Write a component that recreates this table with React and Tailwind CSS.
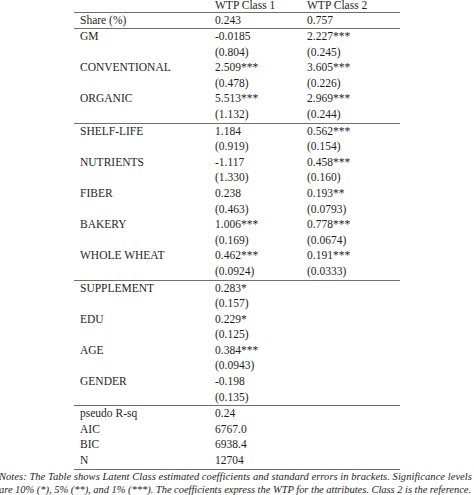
import React from "react";

function Row({ a, b, c }) {
  return (
    <div className="grid grid-cols-[141px_92px_93px] h-[15.6px] items-center leading-[15.6px] whitespace-nowrap">
      <div className="pl-[6px]">{a}</div>
      <div>{b}</div>
      <div>{c}</div>
    </div>
  );
}

const sec2 = [
  ["GM", "-0.0185", "2.227***"],
  ["", "(0.804)", "(0.245)"],
  ["CONVENTIONAL", "2.509***", "3.605***"],
  ["", "(0.478)", "(0.226)"],
  ["ORGANIC", "5.513***", "2.969***"],
  ["", "(1.132)", "(0.244)"],
];
const sec3 = [
  ["SHELF-LIFE", "1.184", "0.562***"],
  ["", "(0.919)", "(0.154)"],
  ["NUTRIENTS", "-1.117", "0.458***"],
  ["", "(1.330)", "(0.160)"],
  ["FIBER", "0.238", "0.193**"],
  ["", "(0.463)", "(0.0793)"],
  ["BAKERY", "1.006***", "0.778***"],
  ["", "(0.169)", "(0.0674)"],
  ["WHOLE WHEAT", "0.462***", "0.191***"],
  ["", "(0.0924)", "(0.0333)"],
];
const sec4 = [
  ["SUPPLEMENT", "0.283*", ""],
  ["", "(0.157)", ""],
  ["EDU", "0.229*", ""],
  ["", "(0.125)", ""],
  ["AGE", "0.384***", ""],
  ["", "(0.0943)", ""],
  ["GENDER", "-0.198", ""],
  ["", "(0.135)", ""],
];
const sec5 = [
  ["pseudo R-sq", "0.24", ""],
  ["AIC", "6767.0", ""],
  ["BIC", "6938.4", ""],
  ["N", "12704", ""],
];

export default function App() {
  return (
    <div className="w-[474px] h-[495px] overflow-hidden bg-white text-[#1e1e1e] text-[11.5px] font-['Liberation_Serif',_'Times_New_Roman',_serif]">
      <div className="ml-[74px] w-[326px]">
        <div className="mt-[-3px] h-[16px] border-b border-[#6e6e6e] grid grid-cols-[141px_92px_93px] items-center leading-[16px] whitespace-nowrap">
          <div></div>
          <div>WTP Class 1</div>
          <div>WTP Class 2</div>
        </div>
        <div className="border-b border-[#6e6e6e] grid grid-cols-[141px_92px_93px] h-[16px] items-center leading-[15px] whitespace-nowrap">
          <div className="pl-[6px]">Share (%)</div>
          <div>0.243</div>
          <div>0.757</div>
        </div>
        <div className="border-b border-[#6e6e6e]">
          {sec2.map((r, i) => <Row key={i} a={r[0]} b={r[1]} c={r[2]} />)}
        </div>
        <div className="border-b border-[#6e6e6e]">
          {sec3.map((r, i) => <Row key={i} a={r[0]} b={r[1]} c={r[2]} />)}
        </div>
        <div className="border-b border-[#6e6e6e]">
          {sec4.map((r, i) => <Row key={i} a={r[0]} b={r[1]} c={r[2]} />)}
        </div>
        <div className="border-b border-[#6e6e6e]">
          {sec5.map((r, i) => <Row key={i} a={r[0]} b={r[1]} c={r[2]} />)}
        </div>
      </div>
      <div className="italic text-[10.55px] leading-[13px] whitespace-nowrap ml-[-1px]">
        <div className="tracking-[0.03px]">Notes: The Table shows Latent Class estimated coefficients and standard errors in brackets. Significance levels</div>
        <div className="tracking-[-0.05px]">are 10% (*), 5% (**), and 1% (***). The coefficients express the WTP for the attributes. Class 2 is the reference.</div>
      </div>
    </div>
  );
}
